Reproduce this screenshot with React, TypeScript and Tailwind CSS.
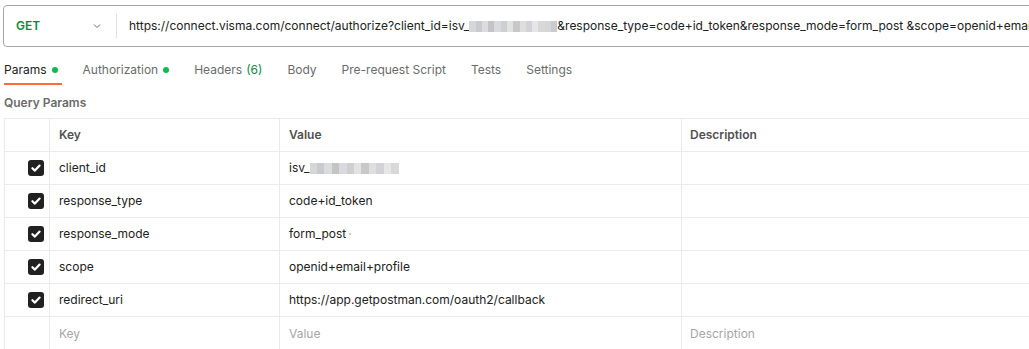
import React from 'react';

const rows = [
  { key: 'client_id', value: 'isv_', blur: true },
  { key: 'response_type', value: 'code+id_token' },
  { key: 'response_mode', value: 'form_post', dot: true },
  { key: 'scope', value: 'openid+email+profile' },
  { key: 'redirect_uri', value: 'https://app.getpostman.com/oauth2/callback' },
];

const blurA = ['#d6d6d6', '#c9c9d0', '#dcdcdc', '#c4c4c4', '#d9d9e0', '#cfcfcf', '#e2e2e2', '#c8c8c8', '#dedede', '#d2d2d8', '#e6e6e6', '#d8d8d8'];

function Blur({ width, cells }: { width: number; cells: number }) {
  return (
    <span className="inline-flex h-[11px] align-middle shrink-0" style={{ width }}>
      {Array.from({ length: cells }).map((_, i) => (
        <span key={i} className="flex-1 h-full" style={{ background: blurA[i % blurA.length] }} />
      ))}
    </span>
  );
}

function Check() {
  return (
    <span className="w-4 h-4 rounded-[3px] bg-[#212121] flex items-center justify-center">
      <svg width="12" height="12" viewBox="0 0 12 12" fill="none">
        <path d="M2.4 6.2 4.9 8.6 9.6 3.6" stroke="white" strokeWidth="2.2" strokeLinecap="round" strokeLinejoin="round" />
      </svg>
    </span>
  );
}

export default function App() {
  const tabs = [
    { label: 'Params', dot: true, active: true },
    { label: 'Authorization', dot: true },
    { label: 'Headers', count: '(6)' },
    { label: 'Body' },
    { label: 'Pre-request Script' },
    { label: 'Tests' },
    { label: 'Settings' },
  ];

  return (
    <div className="w-[1029px] h-[349px] overflow-hidden bg-white text-[12px] leading-[16px] text-[#212121]" style={{ fontFamily: 'Inter, "Noto Sans", sans-serif' }}>
      {/* url bar */}
      <div className="pt-[5px] pl-[3px]">
        <div className="h-[42px] w-[1040px] border border-[#a6a6a6] rounded-[4px] flex items-center">
          <div className="w-[112px] shrink-0 pl-[12px] pr-[14px] flex items-center justify-between">
            <span className="font-semibold text-[#0b8a3e] text-[12px]">GET</span>
            <svg width="10" height="10" viewBox="0 0 10 10" fill="none">
              <path d="M2 3.5 5 6.5 8 3.5" stroke="#6b6b6b" strokeWidth="1" />
            </svg>
          </div>
          <div className="w-px h-[24px] bg-[#e0e0e0] shrink-0" />
          <div className="pl-[12px] whitespace-nowrap flex items-center">
            <span>https://connect.visma.com/connect/authorize?client_id=isv_</span>
            <Blur width={88} cells={14} />
            <span>&amp;response_type=code+id_token&amp;response_mode=form_post &amp;scope=openid+email+profile</span>
          </div>
        </div>
      </div>

      {/* tabs */}
      <div className="flex h-[40px] pl-[4px] gap-[25px]">
        {tabs.map((t) => (
          <div key={t.label} className={`h-[40px] flex items-center pt-[6px] relative ${t.active ? 'text-[#212121]' : 'text-[#6b6b6b]'}`}>
            <span>{t.label}</span>
            {t.count && <span className="ml-[4px] text-[#0b8a3e]">{t.count}</span>}
            {t.dot && <span className="ml-[5px] w-[6px] h-[6px] rounded-full bg-[#0cbb52]" />}
            {t.active && <span className="absolute left-0 right-[-4px] bottom-[2px] h-[2px] bg-[#ff6c37]" />}
          </div>
        ))}
      </div>

      <div className="pl-[4px] pt-[8px] pb-[7px] font-semibold text-[#6b6b6b]">Query Params</div>

      {/* table */}
      <div className="ml-[4px] border-t border-l border-[#ebebeb] w-[1040px]">
        <div className="grid grid-cols-[45px_230px_402px_1fr] h-[33px] border-b border-[#ebebeb] font-semibold text-[#505050]">
          <div className="border-r border-[#ebebeb]" />
          <div className="border-r border-[#ebebeb] pl-[9px] flex items-center">Key</div>
          <div className="border-r border-[#ebebeb] pl-[9px] flex items-center">Value</div>
          <div className="pl-[8px] flex items-center">Description</div>
        </div>
        {rows.map((r) => (
          <div key={r.key} className="grid grid-cols-[45px_230px_402px_1fr] h-[33px] border-b border-[#ebebeb]">
            <div className="border-r border-[#ebebeb] flex items-center justify-end pr-[5px]">
              <Check />
            </div>
            <div className="border-r border-[#ebebeb] pl-[9px] flex items-center">{r.key}</div>
            <div className="border-r border-[#ebebeb] pl-[9px] flex items-center">
              <span>{r.value}</span>
              {r.blur && <Blur width={89} cells={12} />}
              {r.dot && <span className="ml-[3px] w-[2px] h-[2px] bg-[#c8c8c8]" />}
            </div>
            <div />
          </div>
        ))}
        <div className="grid grid-cols-[45px_230px_402px_1fr] h-[33px] text-[#a6a6a6]">
          <div className="border-r border-[#ebebeb]" />
          <div className="border-r border-[#ebebeb] pl-[9px] flex items-center">Key</div>
          <div className="border-r border-[#ebebeb] pl-[9px] flex items-center">Value</div>
          <div className="pl-[8px] flex items-center">Description</div>
        </div>
      </div>
    </div>
  );
}
